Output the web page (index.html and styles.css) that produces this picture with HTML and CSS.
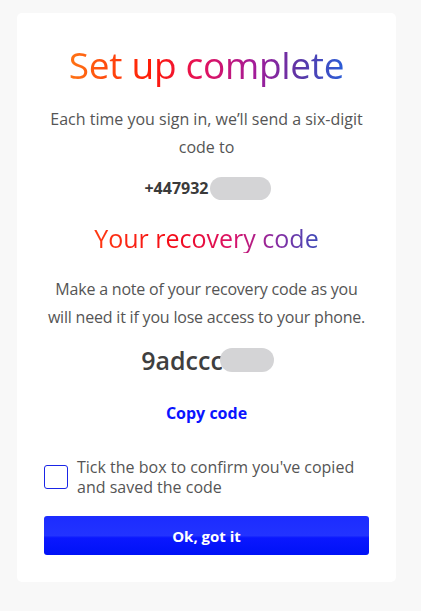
FILE: index.html
```html
<!DOCTYPE html>
<html lang="en">
<head>
<meta charset="utf-8">
<title>Set up complete</title>
<link rel="stylesheet" href="styles.css">
</head>
<body>
<main class="page">
  <section class="card">
    <h1 class="title">Set up complete</h1>
    <p class="text">Each time you sign in, we’ll send a six-digit code to</p>
    <p class="phone">+447932<span class="redact redact-phone"></span></p>
    <h2 class="subtitle">Your recovery code</h2>
    <p class="text text-note">Make a note of your recovery code as you will need it if you lose access to your phone.</p>
    <p class="code">9adccc<span class="redact redact-code"></span></p>
    <a class="copy" href="#">Copy code</a>
    <label class="confirm">
      <span class="box"></span>
      <span class="confirm-text">Tick the box to confirm you've copied and saved the code</span>
    </label>
    <button class="btn" type="button">Ok, got it</button>
  </section>
</main>
</body>
</html>
```
FILE: styles.css
```css
* { box-sizing: border-box; }
html, body { margin: 0; padding: 0; }
body {
  background: #f8f8f8;
  font-family: "Open Sans", "Noto Sans", sans-serif;
  color: #555;
}
.page {
  padding: 13px 25px 29px 17px;
}
.card {
  background: #fff;
  border-radius: 5px;
  height: 569px;
  padding: 30px 27px 0 27px;
  display: flex;
  flex-direction: column;
  align-items: center;
  text-align: center;
}
.title {
  margin: 0;
  font-weight: 400;
  font-size: 37px;
  line-height: 44px;
  letter-spacing: -0.3px;
  background: linear-gradient(90deg, #ff7414 0%, #ff1a06 30%, #e4115c 48%, #a11c9a 68%, #5a36a6 84%, #2a5ed8 100%);
  -webkit-background-clip: text;
  background-clip: text;
  color: transparent;
}
.text {
  margin: 18px 0 0;
  font-size: 16px;
  line-height: 28px;
  width: 318px;
}
.phone {
  margin: 15px 0 0;
  font-size: 16px;
  font-weight: 700;
  color: #3a3a3a;
  line-height: 24px;
  display: flex;
  align-items: center;
  padding-left: 2px;
}
.redact {
  display: inline-block;
  background: #d4d4d6;
  border-radius: 12px;
}
.redact-phone { width: 61px; height: 23px; margin-left: 1px; }
.subtitle {
  margin: 23px 0 0;
  font-size: 25px;
  font-weight: 400;
  line-height: 30px;
  background: linear-gradient(90deg, #ff3a12 0%, #f40a16 35%, #d9126a 62%, #8c2aa0 80%, #3d4bb8 100%);
  -webkit-background-clip: text;
  background-clip: text;
  color: transparent;
}
.text-note {
  margin-top: 22px;
  width: 326px;
  letter-spacing: -0.2px;
}
.code {
  margin: 14px 0 0;
  font-size: 25px;
  font-weight: 600;
  color: #3f3f3f;
  line-height: 30px;
  display: flex;
  align-items: center;
  padding-left: 2px;
}
.redact-code { width: 54px; height: 24px; margin-left: -3px; }
.copy {
  margin-top: 28px;
  font-size: 16px;
  font-weight: 700;
  color: #0a14ff;
  text-decoration: none;
  line-height: 20px;
}
.confirm {
  margin-top: 34px;
  align-self: stretch;
  display: flex;
  align-items: flex-start;
  gap: 9px;
  text-align: left;
  font-size: 16px;
  line-height: 20px;
}
.box {
  flex: 0 0 auto;
  width: 24px;
  height: 24px;
  margin-top: 8px;
  border: 1.5px solid #1a25e6;
  border-radius: 3px;
  background: #fff;
}
.confirm-text { color: #555; }
.btn {
  margin-top: 19px;
  align-self: stretch;
  height: 39px;
  border: 0;
  border-radius: 3px;
  background: linear-gradient(180deg, #1c2cff 0%, #2233ff 50%, #0a17ff 56%, #0012f6 100%);
  color: #fff;
  font-family: inherit;
  font-size: 15px;
  font-weight: 700;
  cursor: pointer;
}
```
